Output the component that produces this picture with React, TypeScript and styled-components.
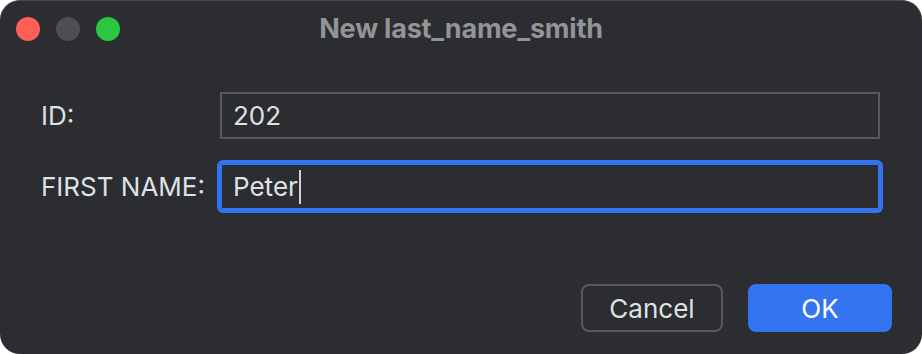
import React from "react";
import styled, { createGlobalStyle } from "styled-components";

const Global = createGlobalStyle`
  html, body { margin: 0; padding: 0; background: #ffffff; }
  body { font-family: Inter, "Noto Sans", sans-serif; }
`;

const Window = styled.div`
  width: 922px;
  height: 354px;
  box-sizing: border-box;
  background: #2b2d30;
  border-radius: 20px;
  border-top: 1px solid #4a4b4e;
  display: flex;
  flex-direction: column;
  overflow: hidden;
`;

const TitleBar = styled.div`
  height: 55px;
  display: grid;
  grid-template-columns: 1fr auto 1fr;
  align-items: center;
  padding: 0 16px;
`;

const Lights = styled.div`
  display: flex;
  gap: 16px;
  align-items: center;
`;

const Light = styled.span<{ $c: string }>`
  width: 24px;
  height: 24px;
  border-radius: 50%;
  background: ${(p) => p.$c};
`;

const Title = styled.div`
  font-size: 27px;
  font-weight: 700;
  color: #939496;
  letter-spacing: -0.2px;
`;

const Form = styled.div`
  display: grid;
  grid-template-columns: 179px 1fr;
  row-gap: 24px;
  align-items: center;
  padding: 36px 42px 0 41px;
`;

const Label = styled.div`
  font-size: 26px;
  color: #dfe1e5;
`;

const Field = styled.div<{ $focused?: boolean }>`
  height: 47px;
  box-sizing: border-box;
  border: 2px solid ${(p) => (p.$focused ? "#3574f0" : "#56585b")};
  border-radius: ${(p) => (p.$focused ? "3px" : "0")};
  box-shadow: ${(p) => (p.$focused ? "0 0 0 3px #3574f0" : "none")};
  display: flex;
  align-items: center;
  padding-left: 11px;
  font-size: 26px;
  color: #dfe1e5;
`;

const Caret = styled.span`
  display: inline-block;
  width: 2px;
  height: 34px;
  background: #cfd1d4;
  margin-left: 1px;
`;

const Spacer = styled.div`
  flex: 1;
`;

const Buttons = styled.div`
  display: flex;
  justify-content: flex-end;
  gap: 25px;
  padding: 0 30px 22px 0;
`;

const Button = styled.div<{ $primary?: boolean }>`
  height: 48px;
  box-sizing: border-box;
  width: ${(p) => (p.$primary ? "144px" : "142px")};
  border-radius: 8px;
  border: 2px solid ${(p) => (p.$primary ? "#3574f0" : "#56585b")};
  background: ${(p) => (p.$primary ? "#3574f0" : "transparent")};
  color: ${(p) => (p.$primary ? "#ffffff" : "#dfe1e5")};
  font-size: 26px;
  display: flex;
  align-items: center;
  justify-content: center;
`;

export default function App() {
  return (
    <>
      <Global />
      <Window>
        <TitleBar>
          <Lights>
            <Light $c="#fe5f57" />
            <Light $c="#4e4f52" />
            <Light $c="#28c840" />
          </Lights>
          <Title>New last_name_smith</Title>
          <div />
        </TitleBar>
        <Form>
          <Label>ID:</Label>
          <Field>202</Field>
          <Label>FIRST NAME:</Label>
          <Field $focused>
            Peter
            <Caret />
          </Field>
        </Form>
        <Spacer />
        <Buttons>
          <Button>Cancel</Button>
          <Button $primary>OK</Button>
        </Buttons>
      </Window>
    </>
  );
}
